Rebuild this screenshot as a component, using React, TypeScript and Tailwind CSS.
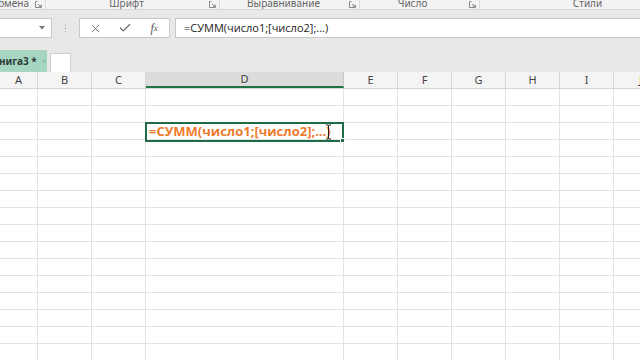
import { X, Check } from 'lucide-react';

const cols = [
  { name: 'A', w: 38 },
  { name: 'B', w: 54 },
  { name: 'C', w: 54 },
  { name: 'D', w: 198 },
  { name: 'E', w: 54 },
  { name: 'F', w: 54 },
  { name: 'G', w: 54 },
  { name: 'H', w: 54 },
  { name: 'I', w: 54 },
  { name: 'J', w: 54 },
];

const rows = Array.from({ length: 17 }, (_, i) => i);

function Launcher() {
  return (
    <svg width="7" height="7" viewBox="0 0 7 7" className="absolute right-[3px] top-[1px]">
      <path d="M0.5 0.5 H2.5 M0.5 0.5 V6.5 H6.5 V4.5" stroke="#8a8a8a" strokeWidth="1" fill="none" />
      <path d="M3 3 L6 6 M6 3.5 V6 H3.5" stroke="#8a8a8a" strokeWidth="1" fill="none" />
    </svg>
  );
}

export default function App() {
  return (
    <div className="w-[640px] h-[360px] overflow-hidden bg-white font-['Noto_Sans',sans-serif]">
      {/* подписи групп ленты */}
      <div className="h-[10px] bg-[#f3f3f3] border-b border-[#d6d6d6] flex text-[10px] leading-[10px] text-[#666] overflow-hidden">
        <div className="relative w-[46px] shrink-0 border-r border-[#dcdcdc]">
          <span className="absolute right-[16px] -top-[2px] whitespace-nowrap">Буфер обмена</span>
          <Launcher />
        </div>
        <div className="relative w-[174px] shrink-0 border-r border-[#dcdcdc] flex justify-center pr-[12px]">
          <span className="-mt-[2px]">Шрифт</span>
          <Launcher />
        </div>
        <div className="relative w-[140px] shrink-0 border-r border-[#dcdcdc] flex justify-center pr-[12px]">
          <span className="-mt-[2px]">Выравнивание</span>
          <Launcher />
        </div>
        <div className="relative w-[120px] shrink-0 border-r border-[#dcdcdc] flex justify-center pr-[14px]">
          <span className="-mt-[2px]">Число</span>
          <Launcher />
        </div>
        <div className="relative flex-1 flex justify-center pl-[55px]">
          <span className="-mt-[2px]">Стили</span>
        </div>
      </div>

      {/* строка формул */}
      <div className="bg-[#e8e8e8] pt-[8px] pb-[12px]">
        <div className="h-[20px] flex">
          <div className="w-[52px] shrink-0 bg-white border border-[#c8c8c8] border-l-0 flex items-center justify-end pr-[6px]">
            <svg width="6" height="4" viewBox="0 0 6 4">
              <path d="M0 0 H6 L3 3.5 Z" fill="#777" />
            </svg>
          </div>
          <div className="w-[27px] shrink-0 flex flex-col items-center justify-center gap-[2px]">
            <span className="w-[1px] h-[1px] bg-[#999]" />
            <span className="w-[1px] h-[1px] bg-[#999]" />
            <span className="w-[1px] h-[1px] bg-[#999]" />
          </div>
          <div className="w-[91px] shrink-0 bg-white border border-[#c8c8c8] flex items-center text-[#666]">
            <div className="w-[30px] flex justify-center pl-[2px]">
              <X size={13} strokeWidth={1.6} />
            </div>
            <div className="w-[30px] flex justify-center">
              <Check size={14} strokeWidth={2} />
            </div>
            <div className="w-[30px] flex justify-center font-['Liberation_Serif',serif] italic text-[12px] text-[#555]">
              f<span className="text-[9px] mt-[3px]">x</span>
            </div>
          </div>
          <div className="w-[5px] shrink-0" />
          <div className="flex-1 bg-white border border-[#c8c8c8] border-r-0 flex items-center pl-[8px] text-[11px] text-[#222] font-['Open_Sans',sans-serif]">
            =СУММ(число1;[число2];...)
          </div>
        </div>
      </div>

      {/* вкладки книг */}
      <div className="h-[22px] bg-[#e8e8e8] flex items-end">
        <div className="w-[47px] h-[22px] bg-[#a6d6c2] flex items-center text-[10px] font-bold text-[#2d3b35] overflow-hidden">
          <span className="-ml-[1px] whitespace-nowrap">нига3 *</span>
          <span className="ml-[5px] text-[9px] text-[#8dbfa9]">×</span>
        </div>
        <div className="w-[21px] h-[19px] ml-[3px] bg-white border border-[#d0d0d0] border-b-0" />
      </div>

      {/* заголовки столбцов */}
      <div className="h-[17px] flex bg-[#f4f4f4] border-b border-[#d4d4d4] text-[11px] text-[#444]">
        {cols.map((c) => (
          <div
            key={c.name}
            style={{ width: c.w }}
            className={
              c.name === 'D'
                ? 'shrink-0 flex items-center justify-center bg-[#dcdcdc] border-r border-[#c8c8c8] border-b-2 border-b-[#217346]'
                : 'shrink-0 flex items-center justify-center border-r border-[#d8d8d8]'
            }
          >
            {c.name}
          </div>
        ))}
      </div>

      {/* ячейки */}
      <div>
        {rows.map((r) => (
          <div key={r} className="h-[17px] flex border-b border-[#e2e2e2]">
            {cols.map((c) => (
              <div key={c.name} style={{ width: c.w }} className="shrink-0 border-r border-[#e2e2e2] relative">
                {r === 2 && c.name === 'D' && (
                  <div className="absolute -left-[1px] -top-[1px] w-[199px] h-[20px] border-2 border-[#1f6b45] z-10 flex items-center pl-[2px]">
                    <span className="font-['Open_Sans',sans-serif] font-bold text-[13px] text-[#ee7a2c] whitespace-nowrap">
                      =СУММ(число1;[число2];...)
                    </span>
                    <svg width="7" height="16" viewBox="0 0 7 16" className="absolute left-[178px] top-[0px]">
                      <path d="M1 1 H3 Q3.5 1 3.5 2 V14 Q3.5 15 3 15 H1 M6 1 H4 Q3.5 1 3.5 2 M3.5 14 Q3.5 15 4 15 H6" stroke="#222" strokeWidth="1" fill="none" />
                    </svg>
                    <span className="absolute -right-[3px] -bottom-[3px] w-[5px] h-[5px] bg-[#1f6b45] border border-white" />
                  </div>
                )}
              </div>
            ))}
          </div>
        ))}
      </div>
    </div>
  );
}
